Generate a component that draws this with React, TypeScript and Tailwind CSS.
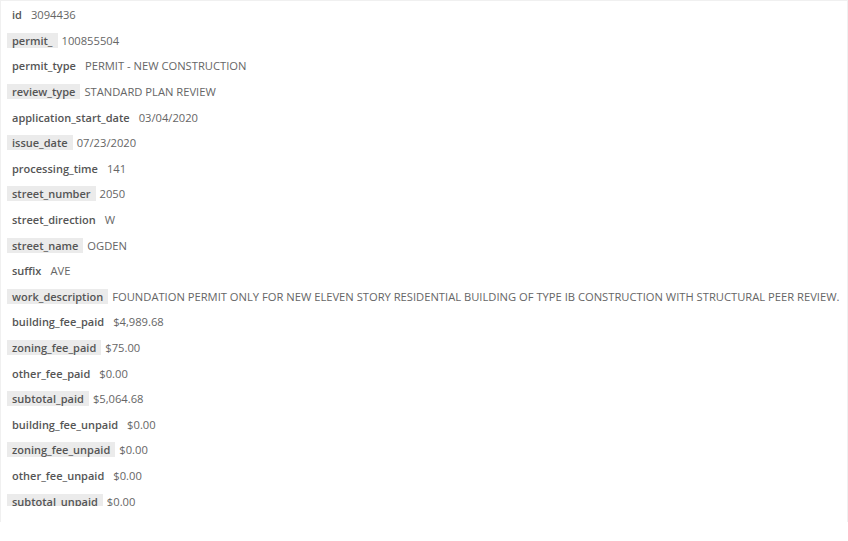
import React from 'react';

type Field = { key: string; value: string };

const fields: Field[] = [
  { key: 'id', value: '3094436' },
  { key: 'permit_', value: '100855504' },
  { key: 'permit_type', value: 'PERMIT - NEW CONSTRUCTION' },
  { key: 'review_type', value: 'STANDARD PLAN REVIEW' },
  { key: 'application_start_date', value: '03/04/2020' },
  { key: 'issue_date', value: '07/23/2020' },
  { key: 'processing_time', value: '141' },
  { key: 'street_number', value: '2050' },
  { key: 'street_direction', value: 'W' },
  { key: 'street_name', value: 'OGDEN' },
  { key: 'suffix', value: 'AVE' },
  {
    key: 'work_description',
    value:
      'FOUNDATION PERMIT ONLY FOR NEW ELEVEN STORY RESIDENTIAL BUILDING OF TYPE IB CONSTRUCTION WITH STRUCTURAL PEER REVIEW.',
  },
  { key: 'building_fee_paid', value: '$4,989.68' },
  { key: 'zoning_fee_paid', value: '$75.00' },
  { key: 'other_fee_paid', value: '$0.00' },
  { key: 'subtotal_paid', value: '$5,064.68' },
  { key: 'building_fee_unpaid', value: '$0.00' },
  { key: 'zoning_fee_unpaid', value: '$0.00' },
  { key: 'other_fee_unpaid', value: '$0.00' },
  { key: 'subtotal_unpaid', value: '$0.00' },
];

export default function App() {
  return (
    <div className="h-[541px] w-[848px] bg-white font-['Open_Sans',sans-serif] text-[11px]">
      <div className="h-[522px] border-x border-t border-[#f0f0f0]">
        {/* Record rows, clipped like a scroll area */}
        <div className="h-[505px] overflow-hidden pl-[6px] pt-[1px]">
          {fields.map((f, i) => (
            <div key={f.key} className="flex h-[25.6px] items-center whitespace-nowrap leading-[15px]">
              <span
                className={`px-[5px] font-semibold text-[#555] ${i % 2 === 1 ? 'bg-[#ebebeb]' : ''}`}
              >
                {f.key}
              </span>
              <span className="ml-[4px] text-[11.2px] text-[#666]">{f.value}</span>
            </div>
          ))}
        </div>
      </div>
    </div>
  );
}
